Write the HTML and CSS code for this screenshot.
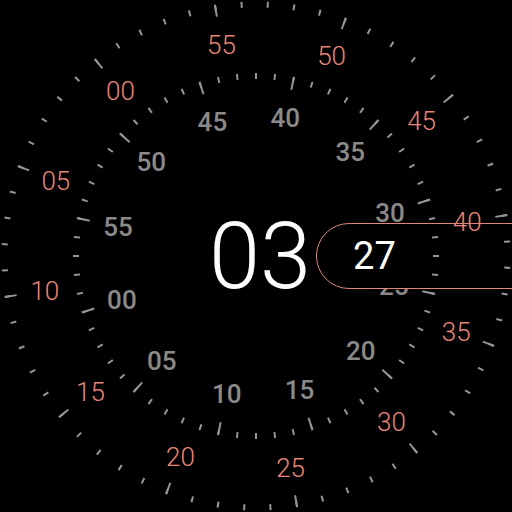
FILE: index.html
```html
<!DOCTYPE html>
<html>
<head>
<meta charset="utf-8">
<link rel="stylesheet" href="styles.css">
</head>
<body>
<div class="face">
  <svg class="dial" viewBox="0 0 512 512" width="512" height="512">
    <circle class="tick inner-minor" cx="256" cy="256" r="180" pathLength="360"/>
    <circle class="tick inner-major" cx="256" cy="256" r="176.5" pathLength="360"/>
    <circle class="tick outer-minor" cx="256" cy="256" r="251.5" pathLength="360"/>
    <circle class="tick outer-major" cx="256" cy="256" r="248.5" pathLength="360"/>
    <g class="num-in">
      <text x="121.9" y="308.9">00</text>
      <text x="161.7" y="370.1">05</text>
      <text x="226.7" y="403.2">10</text>
      <text x="299.6" y="399.4">15</text>
      <text x="360.8" y="359.6">20</text>
      <text x="393.9" y="294.6">25</text>
      <text x="390.1" y="221.7">30</text>
      <text x="350.3" y="160.5">35</text>
      <text x="285.3" y="127.4">40</text>
      <text x="212.4" y="131.2">45</text>
      <text x="151.2" y="171.0">50</text>
      <text x="118.1" y="236.0">55</text>
    </g>
    <g class="num-out">
      <text x="120.5" y="99.7">00</text>
      <text x="55.8" y="189.7">05</text>
      <text x="44.8" y="299.9">10</text>
      <text x="90.4" y="400.8">15</text>
      <text x="180.4" y="465.5">20</text>
      <text x="290.6" y="476.5">25</text>
      <text x="391.5" y="430.9">30</text>
      <text x="456.2" y="340.9">35</text>
      <text x="467.2" y="230.7">40</text>
      <text x="421.6" y="129.8">45</text>
      <text x="331.6" y="65.1">50</text>
      <text x="221.4" y="54.1">55</text>
    </g>
  </svg>
  <div class="overlay">
    <div class="hour">03</div>
    <div class="capsule"><span class="minute">27</span></div>
  </div>
</div>
</body>
</html>
```
FILE: styles.css
```css
html, body {
  margin: 0;
  padding: 0;
  background: #000;
}
.face {
  position: relative;
  width: 512px;
  height: 512px;
  overflow: hidden;
  background: #000;
  font-family: Roboto, "Liberation Sans", sans-serif;
}
.dial {
  position: absolute;
  left: 0;
  top: 0;
  display: block;
}
.tick {
  fill: none;
  stroke: #959595;
}
.inner-minor {
  stroke-width: 6;
  stroke-dasharray: 0.64 5.36;
  stroke-dashoffset: 0.32;
}
.inner-major {
  stroke-width: 13;
  stroke-dasharray: 0.65 29.35;
  stroke-dashoffset: 18.325;
}
.outer-minor {
  stroke-width: 6;
  stroke-dasharray: 0.46 5.54;
  stroke-dashoffset: 3.53;
}
.outer-major {
  stroke-width: 12;
  stroke-dasharray: 0.46 29.54;
  stroke-dashoffset: 9.53;
}
.num-in text, .num-out text {
  font-family: Roboto, "Liberation Sans", sans-serif;
  font-size: 26px;
  text-anchor: middle;
}
.num-in text {
  fill: #8a8a8a;
  font-weight: 500;
}
.num-out text {
  fill: #e8867a;
  font-weight: 300;
}
.overlay {
  position: absolute;
  left: 0;
  top: 0;
  width: 512px;
  height: 512px;
  display: flex;
  align-items: center;
  padding-left: 209px;
  box-sizing: border-box;
}
.hour {
  color: #fff;
  font-size: 92px;
  font-weight: 300;
  line-height: 1;
  margin-top: 2px;
}
.capsule {
  flex: none;
  margin-left: 5px;
  width: 240px;
  height: 66px;
  box-sizing: border-box;
  border: 1.5px solid #e0867a;
  border-radius: 33px;
  background: linear-gradient(to right, #000 0, #000 95px, rgba(0,0,0,0) 112px);
  display: flex;
  align-items: center;
  padding-left: 36px;
}
.minute {
  color: #fff;
  font-size: 38px;
  font-weight: 400;
  line-height: 1;
}
```
